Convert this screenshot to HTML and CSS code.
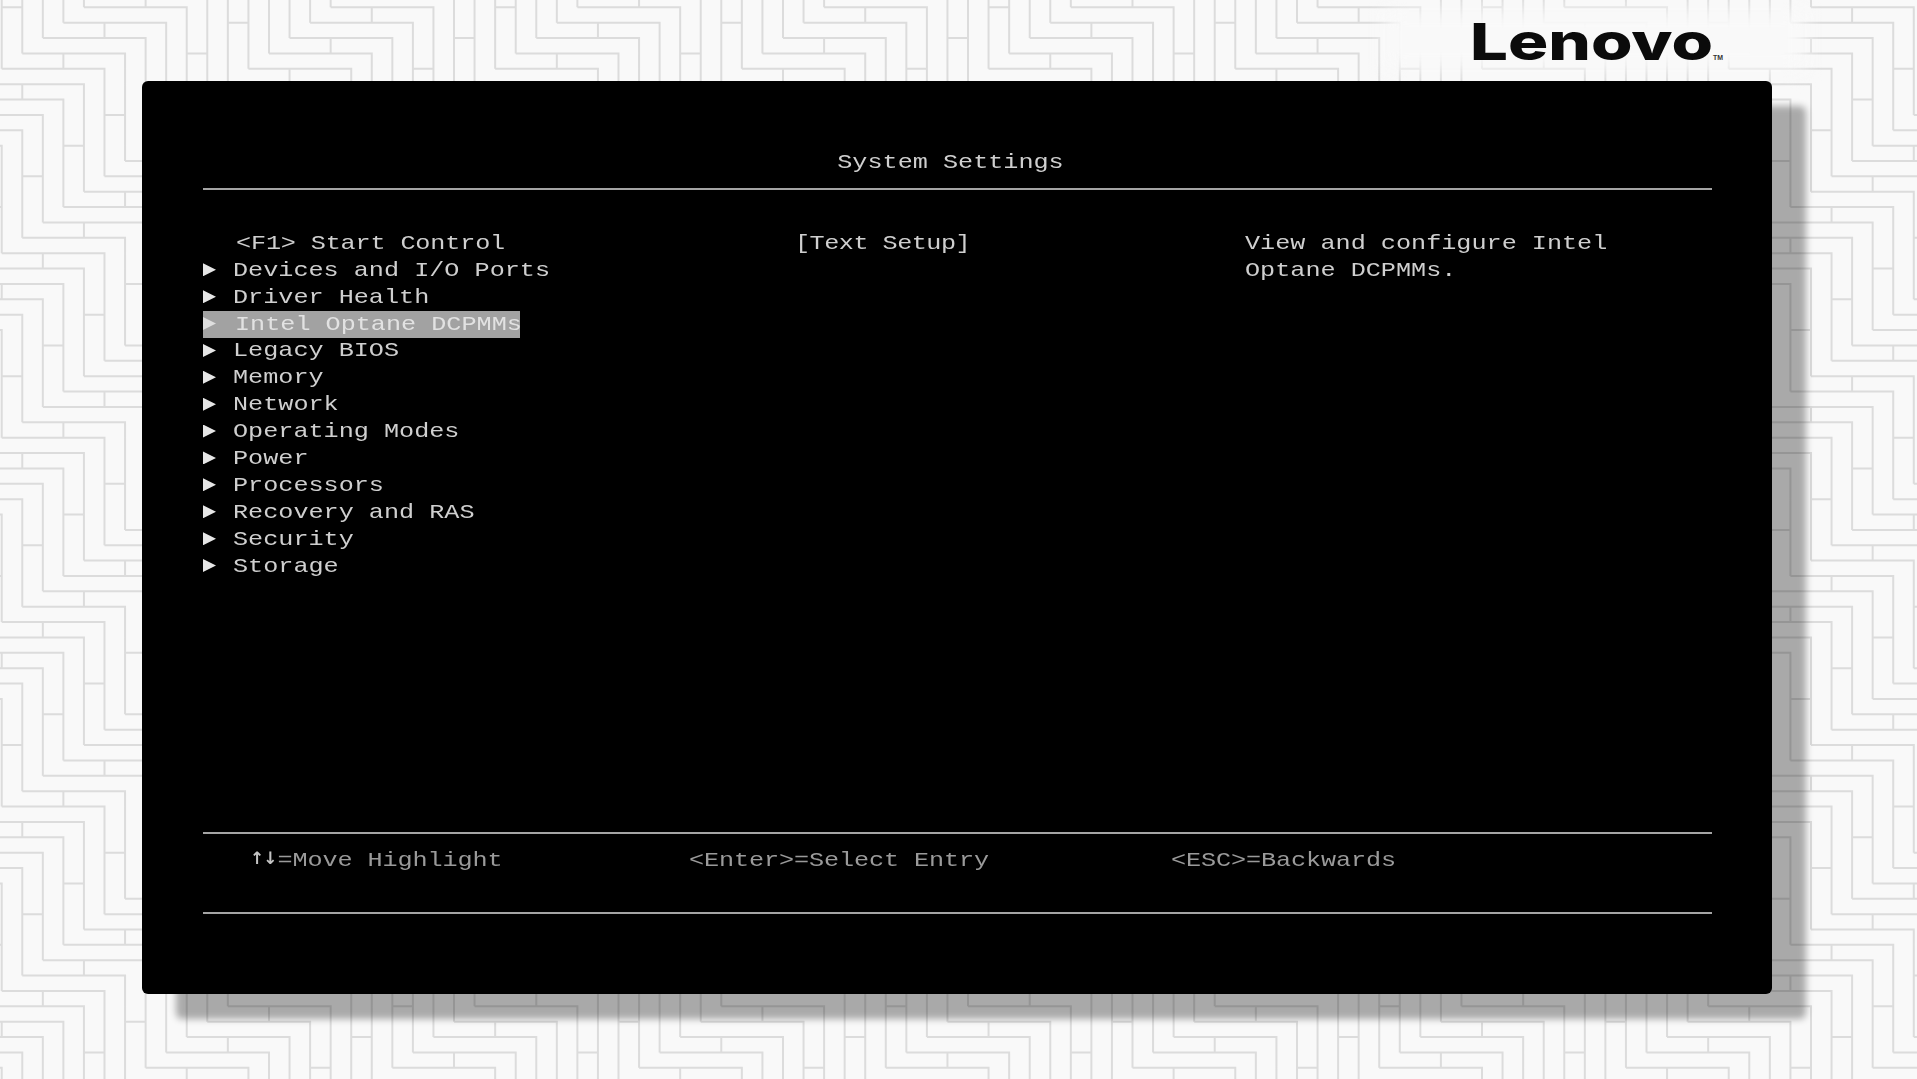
FILE: index.html
```html
<!DOCTYPE html>
<html lang="en">
<head>
<meta charset="utf-8">
<title>System Settings</title>
<link rel="stylesheet" href="styles.css">
</head>
<body>
<svg class="bricks" width="1917" height="1079" aria-hidden="true">
  <defs>
    <path id="m" d="M0 0H102.8V107.59M102.8 46.11H123.36M-20.56 15.37H82.24V122.96M20.56 15.37V30.74"/>
    <g id="a2"><use href="#m"/><use href="#m" x="-41.12" y="30.74"/></g>
    <g id="a4"><use href="#a2"/><use href="#a2" x="-82.24" y="61.48"/></g>
    <g id="a8"><use href="#a4"/><use href="#a4" x="-164.48" y="122.96"/></g>
    <g id="a16"><use href="#a8"/><use href="#a8" x="-328.96" y="245.92"/></g>
    <g id="a32"><use href="#a16"/><use href="#a16" x="-657.92" y="491.84"/></g>
    <g id="a64"><use href="#a32"/><use href="#a32" x="-1315.84" y="983.68"/></g>
    <g id="b2"><use href="#a64"/><use href="#a64" x="102.8" y="107.59"/></g>
    <g id="b4"><use href="#b2"/><use href="#b2" x="205.6" y="215.18"/></g>
    <g id="b8"><use href="#b4"/><use href="#b4" x="411.2" y="430.36"/></g>
    <g id="b16"><use href="#b8"/><use href="#b8" x="822.4" y="860.72"/></g>
  </defs>
  <g transform="translate(1111.94 -1498.96)">
    <use href="#b16"/>
    <use href="#b4" x="1644.8" y="1721.44"/>
  </g>
</svg>
<div class="logo-wash"></div>
<svg class="logo" width="260" height="50" viewBox="0 0 260 50" role="img" aria-label="Lenovo">
  <text class="logo-word" x="0" y="40" textLength="243" lengthAdjust="spacingAndGlyphs">Lenovo</text>
  <text class="logo-tm" x="243" y="40" textLength="10" lengthAdjust="spacingAndGlyphs">TM</text>
</svg>
<main class="panel">
  <h1 class="title"><span class="t">System Settings</span></h1>
  <hr class="rule">
  <section class="content">
    <ul class="menu">
      <li class="entry plain"><span class="t">&lt;F1&gt; Start Control</span></li>
      <li class="entry"><i class="tri"></i><span class="t">Devices and I/O Ports</span></li>
      <li class="entry"><i class="tri"></i><span class="t">Driver Health</span></li>
      <li class="entry selected"><i class="tri"></i><span class="t">Intel Optane DCPMMs</span></li>
      <li class="entry"><i class="tri"></i><span class="t">Legacy BIOS</span></li>
      <li class="entry"><i class="tri"></i><span class="t">Memory</span></li>
      <li class="entry"><i class="tri"></i><span class="t">Network</span></li>
      <li class="entry"><i class="tri"></i><span class="t">Operating Modes</span></li>
      <li class="entry"><i class="tri"></i><span class="t">Power</span></li>
      <li class="entry"><i class="tri"></i><span class="t">Processors</span></li>
      <li class="entry"><i class="tri"></i><span class="t">Recovery and RAS</span></li>
      <li class="entry"><i class="tri"></i><span class="t">Security</span></li>
      <li class="entry"><i class="tri"></i><span class="t">Storage</span></li>
    </ul>
    <div class="setup"><span class="t">[Text Setup]</span></div>
    <div class="help">
      <span class="t line">View and configure Intel</span>
      <span class="t line">Optane DCPMMs.</span>
    </div>
  </section>
  <hr class="rule">
  <footer class="keys">
    <span class="key"><b class="updown">↑↓</b><span class="t">=Move Highlight</span></span>
    <span class="key"><span class="t">&lt;Enter&gt;=Select Entry</span></span>
    <span class="key"><span class="t">&lt;ESC&gt;=Backwards</span></span>
  </footer>
  <hr class="rule">
</main>
</body>
</html>
```
FILE: styles.css
```css
html, body {
  margin: 0;
  padding: 0;
  width: 1917px;
  height: 1079px;
  overflow: hidden;
  background: #f9f9f9;
}
body {
  position: relative;
  padding: 81px 0 0 142px;
  box-sizing: border-box;
  font-family: "Liberation Mono", monospace;
}
.bricks {
  position: absolute;
  left: 0;
  top: 0;
  fill: none;
  stroke: #dcdcdc;
  stroke-width: 2;
  filter: blur(0.5px);
}
.logo-wash {
  position: absolute;
  left: 1385px;
  top: 10px;
  width: 420px;
  height: 60px;
  background: #f9f9f9;
  filter: blur(10px);
}
.logo {
  position: absolute;
  left: 1470px;
  top: 20px;
  overflow: visible;
}
.logo-word {
  font-family: Inter, sans-serif;
  font-weight: 800;
  font-size: 51px;
  fill: #0b0b0b;
}
.logo-tm {
  font-family: "Liberation Sans", sans-serif;
  font-size: 7px;
  font-weight: 700;
  fill: #333;
}
.panel {
  position: relative;
  display: flex;
  flex-direction: column;
  width: 1630px;
  height: 913px;
  box-sizing: border-box;
  padding: 69px 60px 80px 61px;
  background: #000;
  border-radius: 6px;
  box-shadow: 34px 25px 7px rgba(0, 0, 0, 0.32);
  color: #cfcfcf;
  font-size: 25.17px;
  line-height: 26.9px;
}
.t {
  display: inline-block;
  transform: scaleY(0.79);
}
.line {
  display: block;
}
.title {
  margin: 0 14px 11px 0;
  font: inherit;
  text-align: center;
}
.rule {
  flex: none;
  width: 100%;
  height: 2px;
  margin: 0;
  border: 0;
  background: #a4a4a4;
}
.content {
  flex: 1;
  display: grid;
  grid-template-columns: 592px 450px 1fr;
  padding-top: 41px;
  filter: blur(0.3px);
}
.menu {
  margin: 0;
  padding: 0;
  list-style: none;
}
.entry {
  display: flex;
  align-items: center;
  height: 26.9px;
  white-space: nowrap;
}
.plain {
  padding-left: 33px;
  letter-spacing: -0.15px;
}
.tri {
  flex: none;
  width: 13px;
  height: 13px;
  margin: -3px 17px 0 0;
  background: #e6e6e6;
  clip-path: polygon(0 0, 100% 50%, 0 100%);
}
.selected {
  width: 317px;
  margin-top: -1px;
  padding-top: 1px;
  background: #a2a2a2;
  color: #e2e2e2;
}
.selected .tri {
  margin-right: 19px;
  background: #dedede;
}
.setup {
  letter-spacing: -0.5px;
}
.keys {
  display: grid;
  grid-template-columns: 439px 482px 1fr;
  height: 78px;
  padding: 14px 0 0 47px;
  box-sizing: border-box;
  color: #9a9a9a;
  letter-spacing: -0.1px;
  filter: blur(0.3px);
}
.key {
  white-space: nowrap;
}
.updown {
  font-family: "DejaVu Sans", sans-serif;
  font-size: 17px;
  line-height: 1;
  letter-spacing: -1px;
  color: #c4c4c4;
  position: relative;
  top: -3px;
  margin-right: 1px;
}
```
